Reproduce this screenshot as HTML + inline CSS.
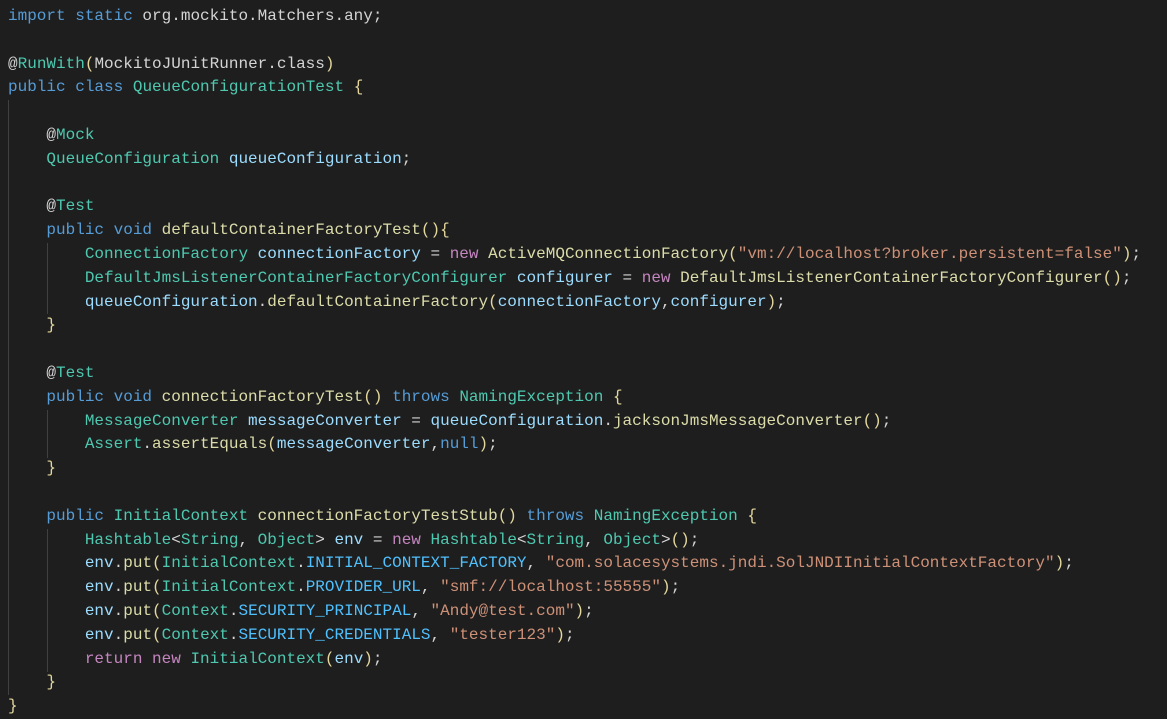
<!DOCTYPE html>
<html><head><meta charset="utf-8"><style>
html,body{margin:0;padding:0;background:#1e1e1e;width:1167px;height:718px;overflow:hidden}
pre{margin:0;position:absolute;left:8px;top:5px;font-family:"Liberation Mono",monospace;font-size:16px;line-height:23.8px;color:#d4d4d4;letter-spacing:0}
.k{color:#569cd6}.t{color:#4ec9b0}.v{color:#9cdcfe}.f{color:#dcdcaa}.s{color:#ce9178}.c{color:#c586c0}.b{color:#e3d79c}.n{color:#4fc1ff}
.g{position:absolute;width:1px;background:#404040}
</style></head><body>
<div class="g" style="left:8px;top:100px;height:595px"></div>
<div class="g" style="left:47px;top:243px;height:71px"></div>
<div class="g" style="left:47px;top:410px;height:48px"></div>
<div class="g" style="left:47px;top:529px;height:143px"></div>
<pre><span class="k">import</span> <span class="k">static</span> org.mockito.Matchers.any;

@<span class="t">RunWith</span><span class="b">(</span>MockitoJUnitRunner.class<span class="b">)</span>
<span class="k">public</span> <span class="k">class</span> <span class="t">QueueConfigurationTest</span> <span class="b">{</span>

    @<span class="t">Mock</span>
    <span class="t">QueueConfiguration</span> <span class="v">queueConfiguration</span>;

    @<span class="t">Test</span>
    <span class="k">public</span> <span class="k">void</span> <span class="f">defaultContainerFactoryTest</span><span class="b">(){</span>
        <span class="t">ConnectionFactory</span> <span class="v">connectionFactory</span> = <span class="c">new</span> <span class="f">ActiveMQConnectionFactory</span><span class="b">(</span><span class="s">"vm://localhost?broker.persistent=false"</span><span class="b">)</span>;
        <span class="t">DefaultJmsListenerContainerFactoryConfigurer</span> <span class="v">configurer</span> = <span class="c">new</span> <span class="f">DefaultJmsListenerContainerFactoryConfigurer</span><span class="b">()</span>;
        <span class="v">queueConfiguration</span>.<span class="f">defaultContainerFactory</span><span class="b">(</span><span class="v">connectionFactory</span>,<span class="v">configurer</span><span class="b">)</span>;
    <span class="b">}</span>

    @<span class="t">Test</span>
    <span class="k">public</span> <span class="k">void</span> <span class="f">connectionFactoryTest</span><span class="b">()</span> <span class="k">throws</span> <span class="t">NamingException</span> <span class="b">{</span>
        <span class="t">MessageConverter</span> <span class="v">messageConverter</span> = <span class="v">queueConfiguration</span>.<span class="f">jacksonJmsMessageConverter</span><span class="b">()</span>;
        <span class="t">Assert</span>.<span class="f">assertEquals</span><span class="b">(</span><span class="v">messageConverter</span>,<span class="k">null</span><span class="b">)</span>;
    <span class="b">}</span>

    <span class="k">public</span> <span class="t">InitialContext</span> <span class="f">connectionFactoryTestStub</span><span class="b">()</span> <span class="k">throws</span> <span class="t">NamingException</span> <span class="b">{</span>
        <span class="t">Hashtable</span>&lt;<span class="t">String</span>, <span class="t">Object</span>&gt; <span class="v">env</span> = <span class="c">new</span> <span class="t">Hashtable</span>&lt;<span class="t">String</span>, <span class="t">Object</span>&gt;<span class="b">()</span>;
        <span class="v">env</span>.<span class="f">put</span><span class="b">(</span><span class="t">InitialContext</span>.<span class="n">INITIAL_CONTEXT_FACTORY</span>, <span class="s">"com.solacesystems.jndi.SolJNDIInitialContextFactory"</span><span class="b">)</span>;
        <span class="v">env</span>.<span class="f">put</span><span class="b">(</span><span class="t">InitialContext</span>.<span class="n">PROVIDER_URL</span>, <span class="s">"smf://localhost:55555"</span><span class="b">)</span>;
        <span class="v">env</span>.<span class="f">put</span><span class="b">(</span><span class="t">Context</span>.<span class="n">SECURITY_PRINCIPAL</span>, <span class="s">"Andy@test.com"</span><span class="b">)</span>;
        <span class="v">env</span>.<span class="f">put</span><span class="b">(</span><span class="t">Context</span>.<span class="n">SECURITY_CREDENTIALS</span>, <span class="s">"tester123"</span><span class="b">)</span>;
        <span class="c">return</span> <span class="c">new</span> <span class="t">InitialContext</span><span class="b">(</span><span class="v">env</span><span class="b">)</span>;
    <span class="b">}</span>
<span class="b">}</span></pre>
</body></html>
